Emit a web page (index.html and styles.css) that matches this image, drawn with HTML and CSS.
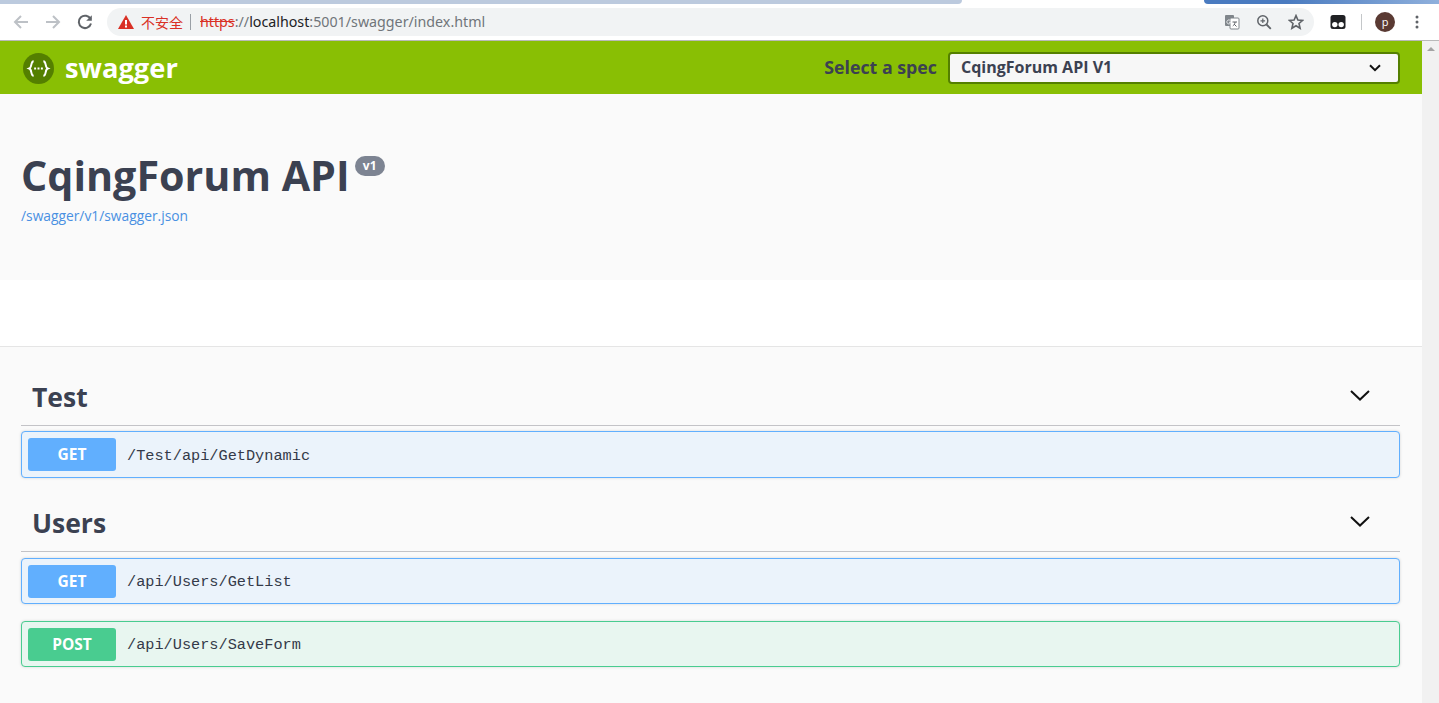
FILE: index.html
```html
<!DOCTYPE html>
<html lang="en">
<head>
<meta charset="utf-8">
<title>Swagger UI</title>
<link rel="stylesheet" href="styles.css">
</head>
<body>
<div class="tabstrip"><div class="tab-a"></div><div class="tab-b"></div></div>
<header class="toolbar">
  <svg class="nav back" width="18" height="18" viewBox="0 0 18 18"><path d="M16 9H3M9 3 3 9l6 6" fill="none" stroke="#bdc1c6" stroke-width="2"/></svg>
  <svg class="nav fwd" width="18" height="18" viewBox="0 0 18 18"><path d="M2 9h13M9 3l6 6-6 6" fill="none" stroke="#bdc1c6" stroke-width="2"/></svg>
  <svg class="nav reload" width="18" height="18" viewBox="0 0 18 18"><path d="M14.600 6.200A6.200 6.200 0 1 0 15 10.500" fill="none" stroke="#5f6368" stroke-width="2"/><path d="M15.800 2.200v5.600h-5.600z" fill="#5f6368"/></svg>
  <div class="omnibox">
    <svg class="warn" width="16" height="14" viewBox="0 0 16 14"><path d="M8 0 16 14H0z" fill="#d93025"/><path d="M7 5h2v4.400H7zM7 10.400h2v2H7z" fill="#fff"/></svg>
    <span class="insecure">不安全</span>
    <span class="sep"></span>
    <span class="url"><span class="scheme">https</span><span class="dim">:</span><span class="dim">//</span><span class="host">localhost</span><span class="dim">:5001/swagger/index.html</span></span>
    <span class="omni-icons">
      <svg width="16" height="16" viewBox="0 0 16 16"><rect x="1" y="1" width="9" height="11" rx="1" fill="#80868b"/><rect x="6" y="4" width="9" height="11" rx="1" fill="#fff" stroke="#80868b"/><path d="M6.500 6.800a2 2 0 1 0 .3 1.500H5" fill="none" stroke="#e8eaed"/><path d="M8.500 8h4.500M11 8c0 2-1 3-2.200 4M10 10l2.500 2.500" fill="none" stroke="#5f6368"/></svg>
      <svg width="16" height="16" viewBox="0 0 16 16"><circle cx="6.800" cy="6.800" r="5" fill="none" stroke="#5f6368" stroke-width="1.500"/><path d="m10.500 10.500 4.300 4.300" stroke="#5f6368" stroke-width="1.800"/><path d="M4.500 6.800h4.600M6.800 4.500v4.600" stroke="#5f6368" stroke-width="1.200"/></svg>
      <svg width="16" height="16" viewBox="0 0 16 16"><path d="m8 1.600 1.900 4.400 4.700.4-3.600 3.100 1.100 4.700L8 11.700l-4.100 2.500L5 9.500 1.400 6.400l4.700-.4z" fill="none" stroke="#5f6368" stroke-width="1.600"/></svg>
    </span>
  </div>
  <svg class="ext" width="16" height="14" viewBox="0 0 16 14"><rect width="15" height="14" x=".5" rx="2.500" fill="#202124"/><circle cx="4.800" cy="9.600" r="2.700" fill="#fff"/><circle cx="11.200" cy="9.600" r="2.700" fill="#fff"/></svg>
  <span class="tool-sep"></span>
  <span class="avatar">p</span>
  <svg class="menu" width="4" height="14" viewBox="0 0 4 14"><circle cx="2" cy="2" r="1.500" fill="#5f6368"/><circle cx="2" cy="7" r="1.500" fill="#5f6368"/><circle cx="2" cy="12" r="1.500" fill="#5f6368"/></svg>
</header>
<div class="viewport">
  <main class="page">
    <div class="topbar">
      <a class="brand">
        <svg width="31" height="31" viewBox="0 0 32 32"><circle cx="16" cy="16" r="16" fill="#547f00"/><path d="M11 8.500c-3.400 0-1.400 6.400-4.500 7.500 3.100 1.100 1.100 7.500 4.500 7.500M21 8.500c3.400 0 1.400 6.400 4.500 7.500-3.100 1.100-1.100 7.500-4.500 7.500" fill="none" stroke="#fff" stroke-width="2"/><path d="M11.500 16h2M15 16h2M18.500 16h2" stroke="#fff" stroke-width="2"/></svg>
        <span class="brand-name">swagger</span>
      </a>
      <div class="spec">
        <span class="spec-label">Select a spec</span>
        <div class="spec-select">
          <span>CqingForum API V1</span>
          <svg width="12" height="8" viewBox="0 0 12 8"><path d="m1 1.200 5 5 5-5" fill="none" stroke="#111" stroke-width="2"/></svg>
        </div>
      </div>
    </div>
    <section class="info">
      <div class="title-row"><h1 class="title">CqingForum API</h1><span class="version">v1</span></div>
      <a class="spec-link">/swagger/v1/swagger.json</a>
    </section>
    <div class="scheme-gap"></div>
    <section class="tags">
      <div class="tag">
        <div class="tag-head"><h2>Test</h2><svg width="20" height="20" viewBox="0 0 20 20"><path d="m1 5 9 8.500L19 5" fill="none" stroke="#111" stroke-width="2"/></svg></div>
        <div class="op get"><span class="method">GET</span><span class="path">/Test/api/GetDynamic</span></div>
      </div>
      <div class="tag">
        <div class="tag-head"><h2>Users</h2><svg width="20" height="20" viewBox="0 0 20 20"><path d="m1 5 9 8.500L19 5" fill="none" stroke="#111" stroke-width="2"/></svg></div>
        <div class="op get"><span class="method">GET</span><span class="path">/api/Users/GetList</span></div>
        <div class="op post"><span class="method">POST</span><span class="path">/api/Users/SaveForm</span></div>
      </div>
    </section>
  </main>
  <aside class="scrollbar"><span class="arrow"></span></aside>
</div>
</body>
</html>
```
FILE: styles.css
```css
* { box-sizing: border-box; }
html, body { margin: 0; height: 100%; overflow: hidden; background: #fff; }
body { font-family: "Open Sans", "Noto Sans", sans-serif; color: #3b4151; display: flex; flex-direction: column; }

.tabstrip { height: 4px; display: flex; justify-content: space-between; flex: none; }
.tab-a { width: 962px; background: #bccade; border-bottom-right-radius: 4px; }
.tab-b { width: 235px; background: linear-gradient(90deg, #4a7bc0 35%, #8fb0dc); border-bottom-left-radius: 4px; }

.toolbar { height: 37px; flex: none; display: flex; align-items: center; padding: 0 0 1px 12px; border-bottom: 1px solid #b9b9b9; }
.nav { flex: none; margin-right: 14px; }
.reload { margin-right: 13px; }
.omnibox { width: 1207px; height: 28px; background: #f1f3f4; border-radius: 14px; display: flex; align-items: center; padding: 0 10px 0 11px; flex: none; font-family: "Noto Sans", sans-serif; }
.warn { flex: none; }
.insecure { color: #d93025; font-family: "Noto Sans CJK SC", sans-serif; font-size: 14px; margin-left: 7px; }
.sep { width: 1px; height: 16px; background: #9aa0a6; margin: 0 9px 0 7px; }
.url { white-space: nowrap; color: #80868b; font-size: 14.250px; }
.scheme { color: #d93025; text-decoration: line-through; }
.host { color: #202124; }
.dim { color: #70757a; }
.omni-icons { margin-left: auto; display: flex; gap: 16px; align-items: center; }
.ext { margin-left: 16px; flex: none; }
.tool-sep { width: 1px; height: 16px; background: #c4c7c9; margin: 0 13px 0 15px; flex: none; }
.avatar { width: 20px; height: 20px; border-radius: 50%; background: #5a3a33; color: #fff; font-size: 11px; display: flex; align-items: center; justify-content: center; flex: none; }
.menu { margin-left: 20px; flex: none; }

.viewport { flex: 1; min-height: 0; display: flex; }
.page { width: 1422px; flex: none; background: #fafafa; overflow: hidden; }
.scrollbar { flex: 1; background: #f1f1f1; display: flex; justify-content: center; padding-top: 6px; }
.arrow { width: 0; height: 0; border: 4px solid transparent; border-top: 0; border-bottom: 4px solid #a3a3a3; }

.topbar { height: 53px; background: #89bf04; display: flex; align-items: center; justify-content: space-between; padding: 0 22px 0 23px; }
.brand { display: flex; align-items: center; gap: 11px; color: #fff; }
.brand svg { display: block; margin-top: 2px; }
.brand-name { font-size: 27.300px; font-weight: 700; line-height: 32px; }
.spec { display: flex; align-items: center; gap: 11px; }
.spec-label { font-size: 17.800px; font-weight: 700; color: #3b4151; padding-bottom: 2px; }
.spec-select { width: 452px; height: 32px; background: #f7f7f7; border: 2px solid #547f00; border-radius: 4px; display: flex; align-items: center; justify-content: space-between; padding: 0 17px 2px 11px; font-size: 16px; font-weight: 700; margin-top: 1px; }
.spec-select svg { margin: 2px 0 0; }

.info { height: 186px; padding: 51px 0 0 21px; }
.title-row { display: flex; align-items: flex-start; }
.title { margin: 0; font-size: 41.250px; line-height: 60px; font-weight: 700; color: #3b4151; white-space: nowrap; }
.version { margin: 11px 0 0 5px; height: 20px; width: 30px; border-radius: 10px; background: #7d8492; color: #fff; font-size: 12px; font-weight: 700; line-height: 20px; text-align: center; }
.spec-link { display: block; margin-top: 2px; font-size: 13.800px; line-height: 18px; color: #4990e2; }

.scheme-gap { height: 67px; background: #fff; border-bottom: 1px solid #e5e5e5; }

.tags { padding: 0 22px 0 21px; }
.tag { padding-top: 29px; }
.tag + .tag { padding-top: 24px; }
.tag-head { height: 50px; display: flex; align-items: center; justify-content: space-between; padding: 0 30px 8px 11px; border-bottom: 1px solid #c3c3c7; }
.tag-head h2 { margin: 0; font-size: 26.500px; font-weight: 700; color: #3b4151; line-height: 32px; }
.tag-head svg { display: block; margin-bottom: 1px; }

.op { height: 46px; margin-top: 6px; border: 1px solid; border-radius: 4px; display: flex; align-items: center; padding: 0 6px; box-shadow: 0 0 3px rgba(0,0,0,.15); }
.tag:first-child .op { height: 47px; margin-top: 5px; }
.op + .op { margin-top: 17px; }
.get { background: #ebf3fb; border-color: #61affe; }
.post { background: #e8f6f0; border-color: #49cc90; }
.method { width: 88px; height: 33px; border-radius: 3px; color: #fff; font-size: 15.500px; font-weight: 700; line-height: 33px; text-align: center; flex: none; }
.get .method { background: #61affe; }
.post .method { background: #49cc90; }
.path { margin: 2px 0 0 11px; font-family: "Liberation Mono", monospace; font-size: 15.250px; color: #343a49; white-space: nowrap; }
```
